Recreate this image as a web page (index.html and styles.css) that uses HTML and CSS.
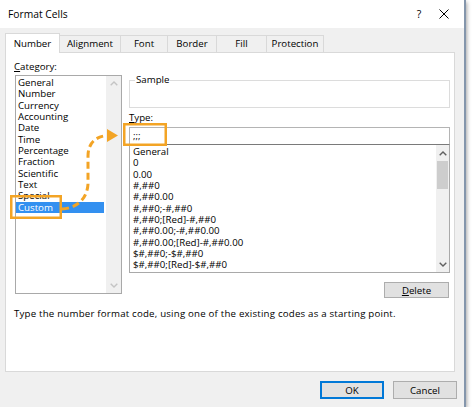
FILE: index.html
```html
<!DOCTYPE html>
<html>
<head>
<meta charset="utf-8">
<link rel="stylesheet" href="styles.css">
</head>
<body>
<div class="dialog">
  <div class="titlebar">
    <span class="title">Format Cells</span>
    <span class="help">?</span>
    <span class="close"><svg width="10" height="10" viewBox="0 0 10 10"><path d="M0.5 0.5L9.5 9.5M9.5 0.5L0.5 9.5" stroke="#000" stroke-width="1" fill="none"/></svg></span>
  </div>
  <div class="body">
    <div class="tabs">
      <div class="tab tab-number active">Number</div>
      <div class="tab tab-alignment">Alignment</div>
      <div class="tab tab-font">Font</div>
      <div class="tab tab-border">Border</div>
      <div class="tab tab-fill">Fill</div>
      <div class="tab tab-protection">Protection</div>
    </div>
    <div class="panel">
      <div class="cols">
        <div class="left">
          <div class="label"><u>C</u>ategory:</div>
          <div class="listbox cat">
            <div class="items">
              <div class="item">General</div>
              <div class="item">Number</div>
              <div class="item">Currency</div>
              <div class="item">Accounting</div>
              <div class="item">Date</div>
              <div class="item">Time</div>
              <div class="item">Percentage</div>
              <div class="item">Fraction</div>
              <div class="item">Scientific</div>
              <div class="item">Text</div>
              <div class="item">Special</div>
              <div class="item selected">Custom</div>
            </div>
            <div class="scrollbar disabled">
              <div class="arrow"><svg width="8" height="5" viewBox="0 0 8 5"><path d="M0.7 4.3L4 1L7.3 4.3" stroke="currentColor" stroke-width="1.4" fill="none"/></svg></div>
              <div class="track"></div>
              <div class="arrow"><svg width="8" height="5" viewBox="0 0 8 5"><path d="M0.7 0.7L4 4L7.3 0.7" stroke="currentColor" stroke-width="1.4" fill="none"/></svg></div>
            </div>
          </div>
        </div>
        <div class="right">
          <div class="sample"><span class="legend">Sample</span></div>
          <div class="label type-label"><u>T</u>ype:</div>
          <div class="input">;;;</div>
          <div class="listbox types">
            <div class="items">
              <div class="item">General</div>
              <div class="item">0</div>
              <div class="item">0.00</div>
              <div class="item">#,##0</div>
              <div class="item">#,##0.00</div>
              <div class="item">#,##0;-#,##0</div>
              <div class="item">#,##0;[Red]-#,##0</div>
              <div class="item">#,##0.00;-#,##0.00</div>
              <div class="item">#,##0.00;[Red]-#,##0.00</div>
              <div class="item">$#,##0;-$#,##0</div>
              <div class="item">$#,##0;[Red]-$#,##0</div>
            </div>
            <div class="scrollbar">
              <div class="arrow"><svg width="8" height="5" viewBox="0 0 8 5"><path d="M0.7 4.3L4 1L7.3 4.3" stroke="currentColor" stroke-width="1.4" fill="none"/></svg></div>
              <div class="thumb"></div>
              <div class="track"></div>
              <div class="arrow"><svg width="8" height="5" viewBox="0 0 8 5"><path d="M0.7 0.7L4 4L7.3 0.7" stroke="currentColor" stroke-width="1.4" fill="none"/></svg></div>
            </div>
          </div>
          <div class="del-row"><button class="btn btn-delete"><u>D</u>elete</button></div>
        </div>
      </div>
      <p class="desc">Type the number format code, using one of the existing codes as a starting point.</p>
    </div>
    <div class="footer">
      <button class="btn btn-ok">OK</button>
      <button class="btn btn-cancel">Cancel</button>
    </div>
  </div>
  <svg class="annot" width="466" height="407" viewBox="0 0 466 407">
    <rect x="11.25" y="196.25" width="49.5" height="21.5" fill="none" stroke="#f3a425" stroke-width="2.5"/>
    <rect x="124.25" y="124.25" width="41.5" height="20.5" fill="none" stroke="#f3a425" stroke-width="2.5"/>
    <path d="M62 209 C76 208 87 200 88 184 L88 156 C88 143 96 136 108 135.5" fill="none" stroke="#f3a425" stroke-width="3" stroke-dasharray="7 4"/>
    <polygon points="107,129 118,135.5 107,142" fill="#f3a425"/>
  </svg>
</div>
</body>
</html>
```
FILE: styles.css
```css
* { box-sizing: border-box; }
body {
  margin: 0;
  background: #fff;
  font-family: "Open Sans", "Noto Sans", sans-serif;
  font-size: 9.7px;
  color: #000;
}
.dialog {
  position: relative;
  width: 466px;
  height: 407px;
  display: flex;
  flex-direction: column;
  background: #f0f0f0;
  border-right: 2px solid #8496ac;
  box-shadow: 1px 2px 4px rgba(0, 0, 0, 0.35);
}
.titlebar {
  height: 28px;
  background: #fff;
  display: flex;
  align-items: center;
  padding-left: 8px;
  padding-right: 5px;
}
.title { flex: 1; font-size: 10.3px; }
.help { width: 20px; text-align: center; font-size: 10.5px; }
.close { width: 30px; display: flex; justify-content: center; align-items: center; }
.body {
  flex: 1;
  padding: 5px 7px 8px 5px;
}
.tabs {
  display: flex;
  align-items: flex-end;
  height: 19px;
}
.tab {
  height: 17px;
  border: 1px solid #d9d9d9;
  border-bottom: none;
  background: #f0f0f0;
  text-align: center;
  line-height: 16px;
  margin-left: -1px;
}
.tab.active {
  height: 20px;
  margin-bottom: -1px;
  background: #fff;
  position: relative;
  z-index: 1;
  padding-top: 1px;
  line-height: 17px;
  margin-left: 0;
}
.tab-number { width: 55px; }
.tab-alignment { width: 62px; }
.tab-font { width: 48px; }
.tab-border { width: 50px; }
.tab-fill { width: 51px; }
.tab-protection { width: 58px; }
.panel {
  width: 450px;
  height: 320px;
  background: #fff;
  border: 1px solid #d9d9d9;
  padding: 7px 4px 0 8px;
}
.cols {
  display: flex;
  gap: 7px;
  align-items: flex-start;
}
.left { width: 108px; }
.right { width: 321px; }
.label { line-height: 13px; }
.listbox {
  display: flex;
  background: #fff;
}
.cat {
  width: 107px;
  height: 219px;
  margin: 2px 0 0 1px;
  border: 1px solid #a9a9a9;
}
.items { flex: 1; }
.cat .items { padding: 1px 2px 0 0; }
.item {
  line-height: 11.33px;
  height: 11.33px;
  padding-left: 2px;
  white-space: nowrap;
}
.item.selected {
  background: #3390f0;
  color: #fff;
}
.scrollbar {
  display: flex;
  flex-direction: column;
  background: #f0f0f0;
  color: #606060;
}
.cat .scrollbar { width: 15px; }
.scrollbar.disabled { color: #c4c4c4; }
.arrow {
  height: 15px;
  display: flex;
  align-items: center;
  justify-content: center;
}
.track { flex: 1; }
.thumb {
  height: 28px;
  margin: 0 1px;
  background: #cdcdcd;
}
.sample {
  margin-top: 20px;
  height: 28px;
  border: 1px solid #dcdcdc;
}
.legend {
  display: inline-block;
  margin: -7px 0 0 5px;
  padding: 0 1px;
  background: #fff;
  line-height: 12px;
  vertical-align: top;
}
.type-label {
  margin-top: 4px;
  line-height: 12px;
}
.input {
  margin-top: 3px;
  height: 17px;
  border: 1px solid #b4b4b4;
  border-bottom: none;
  padding-left: 3px;
  line-height: 15px;
  background: #fff;
}
.types {
  height: 129px;
  border: 1px solid #a9a9a9;
  border-top-color: #7a7a7a;
}
.types .items { padding: 1px 0 0 1px; }
.types .scrollbar { width: 13px; }
.types .arrow { height: 16px; }
.del-row {
  display: flex;
  justify-content: flex-end;
  margin-top: 9px;
}
.btn {
  font-family: inherit;
  font-size: 9.7px;
  color: #000;
  background: #e1e1e1;
  border: 1px solid #adadad;
  padding: 0;
  margin: 0;
}
.btn-delete { width: 65px; height: 16px; margin-right: 1px; }
.desc {
  margin: 10px 0 0;
  line-height: 12px;
  letter-spacing: 0.2px;
}
.footer {
  display: flex;
  justify-content: flex-end;
  gap: 9px;
  margin-top: 9px;
}
.btn-ok, .btn-cancel { width: 64px; height: 18px; }
.btn-ok { border: 1px solid #0078d7; box-shadow: inset 0 0 0 1px #0078d7; }
.annot {
  position: absolute;
  left: 0;
  top: 0;
  pointer-events: none;
}
```
